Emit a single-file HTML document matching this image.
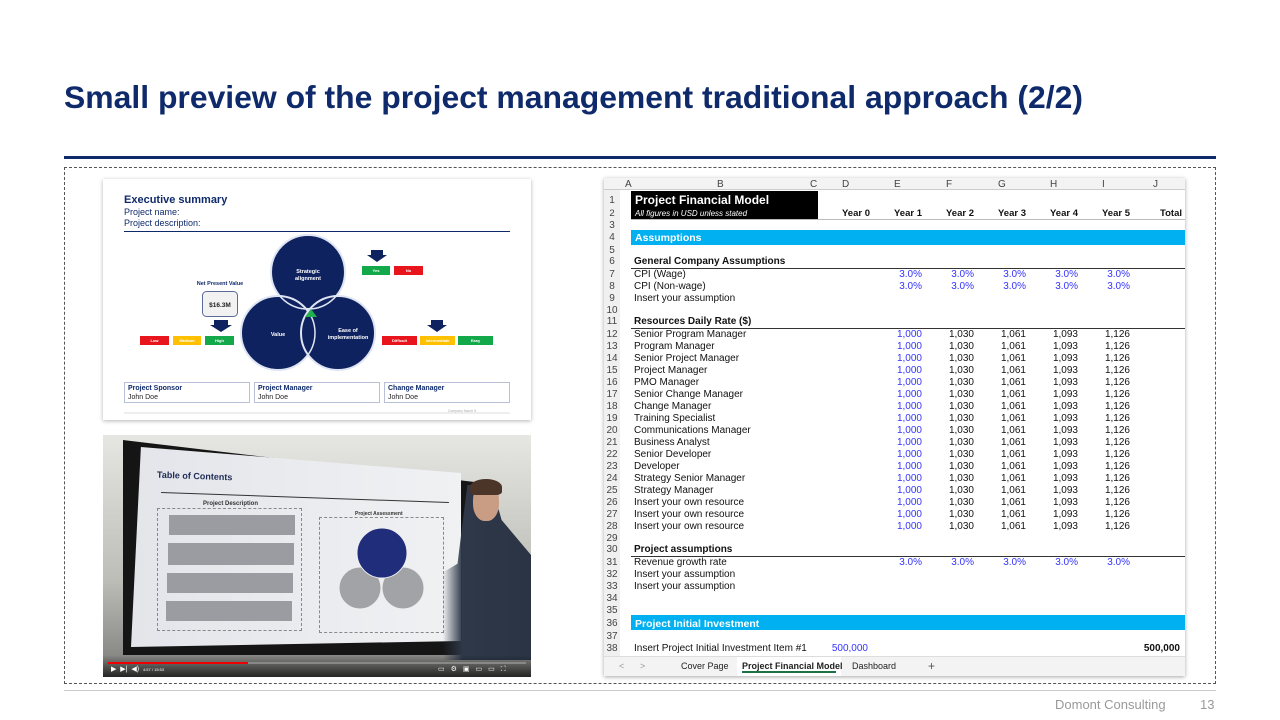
<!DOCTYPE html>
<html><head><meta charset="utf-8"><style>
*{margin:0;padding:0;box-sizing:border-box}
body{width:1280px;height:720px;background:#fff;position:relative;overflow:hidden;font-family:"Liberation Sans",Arial,sans-serif}
.a{position:absolute}
h1{position:absolute;left:64px;top:79px;font-size:31.9px;font-weight:bold;color:#0f2a6b;white-space:nowrap}
.sheet{position:absolute;left:604px;top:178px;width:581px;height:498px;background:#fff;box-shadow:0 1px 4px rgba(0,0,0,.35);overflow:hidden;font-size:10px;color:#111}
.r{position:absolute;left:0;width:581px;height:12px;line-height:12px}
.r i{position:absolute;left:0;width:16px;text-align:center;font-style:normal;color:#444;background:#f0f0f0;height:13px}
.r b{position:absolute;left:30px;font-weight:normal;white-space:nowrap}
.r s{position:absolute;text-decoration:none;text-align:right;width:50px}
.bl{color:#3333ff}
.e{left:268px}.f{left:320px}.g{left:372px}.h{left:424px}.k{left:476px}
.slide{position:absolute;left:103px;top:179px;width:428px;height:241px;background:#fff;box-shadow:0 1px 4px rgba(0,0,0,.3);font-family:"Liberation Sans",sans-serif}
.tag{position:absolute;height:9px;font-size:4px;color:#fff;font-weight:bold;text-align:center;line-height:9px}
.pb{position:absolute;top:203px;width:126px;height:21px;border:1px solid #b8c0d8;font-size:7px;padding:1px 3px;color:#222;line-height:9px}
.pb strong{color:#0f2a6b}
</style></head><body>
<h1>Small preview of the project management traditional approach (2/2)</h1>
<div class="a" style="left:64px;top:156px;width:1152px;height:3px;background:#0f2a6b"></div>
<div class="a" style="left:64px;top:167px;width:1152px;height:517px;border:1px dashed #555"></div>
<div class="a" style="left:64px;top:690px;width:1152px;height:1px;background:#ccc"></div>
<div class="a" style="left:1055px;top:697px;font-size:13px;color:#999">Domont Consulting</div>
<div class="a" style="left:1200px;top:697px;font-size:13px;color:#999">13</div>

<!-- Executive summary slide -->
<div class="slide">
<div class="a" style="left:21px;top:15px;font-size:11px;font-weight:bold;color:#0f2a6b">Executive summary</div>
<div class="a" style="left:21px;top:28px;font-size:9px;color:#0f2a6b;line-height:11px">Project name:<br>Project description:</div>
<div class="a" style="left:21px;top:52px;width:386px;height:1px;background:#0f2a6b"></div>
<svg class="a" style="left:0;top:0" width="428" height="241">
<g fill="#0f2260" stroke="#dfe5f3" stroke-width="2">
<circle cx="205" cy="93" r="37"/><circle cx="175" cy="154" r="37"/><circle cx="235" cy="154" r="37"/>
</g>
<g fill="none" stroke="#dfe5f3" stroke-width="1.5"><circle cx="205" cy="93" r="37"/><circle cx="175" cy="154" r="37"/></g>
<polygon points="202,138 214,138 208,130" fill="#22b14c"/>
<g fill="#0f2260"><polygon points="111,141 125,141 125,146 129,146 118,153 107,146 111,146"/>
<polygon points="268,71 280,71 280,76 284,76 274,83 264,76 268,76"/>
<polygon points="328,141 340,141 340,146 344,146 334,153 324,146 328,146"/></g>
<rect x="99.5" y="112.5" width="35" height="25" rx="4" fill="#f2f2f2" stroke="#5a6a9a"/>
<g font-family="Liberation Sans" font-weight="bold" fill="#fff" font-size="5.5" text-anchor="middle">
<text x="205" y="94">Strategic</text><text x="205" y="101">alignment</text>
<text x="175" y="157">Value</text>
<text x="245" y="153">Ease of</text><text x="245" y="160">implementation</text>
<text x="117" y="106" fill="#0f2a6b">Net Present Value</text>
<text x="117" y="128" fill="#222" font-size="6.5">$16.3M</text>
<text x="359" y="233" fill="#aaa" font-weight="normal" font-size="3.5">Company Name      5</text>
</g>
<line x1="21" y1="234" x2="407" y2="234" stroke="#ddd"/>
</svg>
<div class="tag" style="left:37px;top:157px;width:29px;background:#e8161c">Low</div>
<div class="tag" style="left:70px;top:157px;width:28px;background:#ffc000">Medium</div>
<div class="tag" style="left:102px;top:157px;width:29px;background:#13a84a">High</div>
<div class="tag" style="left:259px;top:87px;width:28px;background:#13a84a">Yes</div>
<div class="tag" style="left:291px;top:87px;width:29px;background:#e8161c">No</div>
<div class="tag" style="left:279px;top:157px;width:35px;background:#e8161c">Difficult</div>
<div class="tag" style="left:317px;top:157px;width:35px;background:#ffc000">Intermediate</div>
<div class="tag" style="left:355px;top:157px;width:35px;background:#13a84a">Easy</div>
<div class="pb" style="left:21px"><strong>Project Sponsor</strong><br>John Doe</div>
<div class="pb" style="left:151px"><strong>Project Manager</strong><br>John Doe</div>
<div class="pb" style="left:281px"><strong>Change Manager</strong><br>John Doe</div>
</div>

<!-- Video -->
<div class="a" style="left:103px;top:435px;width:428px;height:242px;overflow:hidden">
<div class="a" style="left:0;top:0;width:428px;height:242px;background:linear-gradient(180deg,#e6e6e2,#bdbdb8 60%,#7a7a78)"></div>
<div class="a" style="left:20px;top:5px;width:360px;height:215px;background:#151515;clip-path:polygon(0 0,100% 20%,100% 100%,0 100%)"></div>
<div class="a" style="left:28px;top:12px;width:330px;height:200px;background:linear-gradient(90deg,#e3e5ea,#f0f1f3);clip-path:polygon(3% 0,100% 13%,100% 97%,0 100%)"></div>
<div class="a" style="left:54px;top:36px;font-size:9px;font-weight:bold;color:#1d2a55;transform:rotate(2deg)">Table of Contents</div>
<div class="a" style="left:58px;top:62px;width:288px;height:1px;background:#333;transform:rotate(2deg)"></div>
<div class="a" style="left:100px;top:66px;font-size:6px;font-weight:bold;color:#333">Project Description</div>
<div class="a" style="left:252px;top:76px;font-size:5px;font-weight:bold;color:#333">Project Assessment</div>
<div class="a" style="left:54px;top:73px;width:145px;height:123px;border:1px dashed #888"></div>
<div class="a" style="left:216px;top:82px;width:125px;height:116px;border:1px dashed #888"></div>
<div class="a" style="left:66px;top:80px;width:126px;height:20px;background:#9a9ca2"></div>
<div class="a" style="left:65px;top:108px;width:126px;height:22px;background:#9a9ca2"></div>
<div class="a" style="left:64px;top:138px;width:126px;height:20px;background:#9a9ca2"></div>
<div class="a" style="left:63px;top:166px;width:126px;height:20px;background:#9a9ca2"></div>
<svg class="a" style="left:0;top:0" width="428" height="242">
<circle cx="257" cy="153" r="21" fill="#a2a3a6" stroke="#eee"/><circle cx="300" cy="153" r="21" fill="#a2a3a6" stroke="#eee"/>
<circle cx="279" cy="118" r="25" fill="#1f2d7a" stroke="#eee"/>
</svg>
<div class="a" style="left:330px;top:50px;width:98px;height:175px;background:linear-gradient(90deg,transparent 10%,#2e3848 30%,#2a3444 100%);clip-path:polygon(35% 0,60% 0,70% 20%,100% 40%,100% 100%,10% 100%,10% 50%,25% 45%)"></div>
<div class="a" style="left:370px;top:48px;width:26px;height:38px;border-radius:45%;background:#c99d83"></div>
<div class="a" style="left:367px;top:44px;width:32px;height:16px;border-radius:50% 50% 20% 20%;background:#4a3528"></div>
<div class="a" style="left:0;top:220px;width:428px;height:22px;background:linear-gradient(transparent,rgba(0,0,0,.7))"></div>
<div class="a" style="left:5px;top:227px;width:418px;height:2px;background:#888"></div>
<div class="a" style="left:5px;top:227px;width:140px;height:2px;background:#e00"></div>
<div class="a" style="left:8px;top:230px;font-size:7px;color:#fff;white-space:nowrap">▶ &nbsp;▶| &nbsp;◀) &nbsp;<span style="font-size:4px">4:57 / 15:53</span></div>
<div class="a" style="left:335px;top:230px;font-size:7px;color:#fff;letter-spacing:6px">▭⚙▣▭▭⛶</div>
</div>

<!-- Spreadsheet -->
<div class="sheet">
<div class="a" style="left:0;top:0;width:581px;height:12px;background:#f3f3f3;border-bottom:1px solid #ccc;font-size:10px;color:#444;line-height:13px">
<span class="a" style="left:21px">A</span><span class="a" style="left:113px">B</span><span class="a" style="left:206px">C</span><span class="a" style="left:238px">D</span><span class="a" style="left:290px">E</span><span class="a" style="left:342px">F</span><span class="a" style="left:394px">G</span><span class="a" style="left:446px">H</span><span class="a" style="left:498px">I</span><span class="a" style="left:549px">J</span></div>
<div class="a" style="left:0;top:12px;width:16px;height:486px;background:#f0f0f0"></div>
<div class="a" style="left:27px;top:13px;width:187px;height:28px;background:#000"></div>
<div class="a" style="left:31px;top:15px;font-size:12px;font-weight:bold;color:#fff">Project Financial Model</div>
<div class="a" style="left:31px;top:31px;font-size:8px;font-style:italic;color:#fff">All figures in USD unless stated</div>
<div class="r" style="top:17px"><i>1</i></div>
<div class="r" style="top:30px;font-weight:bold;font-size:9.5px"><i style="font-weight:normal">2</i><s style="left:216px">Year 0</s><s class="e">Year 1</s><s class="f">Year 2</s><s class="g">Year 3</s><s class="h">Year 4</s><s class="k">Year 5</s><s style="left:528px">Total</s></div>
<div class="a" style="left:27px;top:41px;width:554px;height:1px;background:#bbb"></div>
<div class="r" style="top:42px"><i>3</i></div>
<div class="a" style="left:27px;top:52px;width:554px;height:15px;background:#00b0f0"></div>
<div class="r" style="top:54px;color:#fff;font-weight:bold;font-size:10.5px"><i style="color:#444;font-weight:normal;font-size:10px">4</i><b style="left:31px;font-weight:bold">Assumptions</b></div>
<div class="r" style="top:67px"><i>5</i></div>
<div class="r" style="top:78px;font-weight:bold"><i style="font-weight:normal">6</i><b style="font-weight:bold">General Company Assumptions</b></div>
<div class="a" style="left:27px;top:90px;width:554px;height:1px;background:#333"></div>
<div class="r" style="top:91px"><i>7</i><b>CPI (Wage)</b><s class="e bl">3.0%</s><s class="f bl">3.0%</s><s class="g bl">3.0%</s><s class="h bl">3.0%</s><s class="k bl">3.0%</s></div>
<div class="r" style="top:103px"><i>8</i><b>CPI (Non-wage)</b><s class="e bl">3.0%</s><s class="f bl">3.0%</s><s class="g bl">3.0%</s><s class="h bl">3.0%</s><s class="k bl">3.0%</s></div>
<div class="r" style="top:115px"><i>9</i><b>Insert your assumption</b></div>
<div class="r" style="top:127px"><i>10</i></div>
<div class="r" style="top:138px"><i>11</i><b style="font-weight:bold">Resources Daily Rate ($)</b></div>
<div class="a" style="left:27px;top:150px;width:554px;height:1px;background:#333"></div>
<div class="r" style="top:151px"><i>12</i><b>Senior Program Manager</b><s class="e bl">1,000</s><s class="f">1,030</s><s class="g">1,061</s><s class="h">1,093</s><s class="k">1,126</s></div>
<div class="r" style="top:163px"><i>13</i><b>Program Manager</b><s class="e bl">1,000</s><s class="f">1,030</s><s class="g">1,061</s><s class="h">1,093</s><s class="k">1,126</s></div>
<div class="r" style="top:175px"><i>14</i><b>Senior Project Manager</b><s class="e bl">1,000</s><s class="f">1,030</s><s class="g">1,061</s><s class="h">1,093</s><s class="k">1,126</s></div>
<div class="r" style="top:187px"><i>15</i><b>Project Manager</b><s class="e bl">1,000</s><s class="f">1,030</s><s class="g">1,061</s><s class="h">1,093</s><s class="k">1,126</s></div>
<div class="r" style="top:199px"><i>16</i><b>PMO Manager</b><s class="e bl">1,000</s><s class="f">1,030</s><s class="g">1,061</s><s class="h">1,093</s><s class="k">1,126</s></div>
<div class="r" style="top:211px"><i>17</i><b>Senior Change Manager</b><s class="e bl">1,000</s><s class="f">1,030</s><s class="g">1,061</s><s class="h">1,093</s><s class="k">1,126</s></div>
<div class="r" style="top:223px"><i>18</i><b>Change Manager</b><s class="e bl">1,000</s><s class="f">1,030</s><s class="g">1,061</s><s class="h">1,093</s><s class="k">1,126</s></div>
<div class="r" style="top:235px"><i>19</i><b>Training Specialist</b><s class="e bl">1,000</s><s class="f">1,030</s><s class="g">1,061</s><s class="h">1,093</s><s class="k">1,126</s></div>
<div class="r" style="top:247px"><i>20</i><b>Communications Manager</b><s class="e bl">1,000</s><s class="f">1,030</s><s class="g">1,061</s><s class="h">1,093</s><s class="k">1,126</s></div>
<div class="r" style="top:259px"><i>21</i><b>Business Analyst</b><s class="e bl">1,000</s><s class="f">1,030</s><s class="g">1,061</s><s class="h">1,093</s><s class="k">1,126</s></div>
<div class="r" style="top:271px"><i>22</i><b>Senior Developer</b><s class="e bl">1,000</s><s class="f">1,030</s><s class="g">1,061</s><s class="h">1,093</s><s class="k">1,126</s></div>
<div class="r" style="top:283px"><i>23</i><b>Developer</b><s class="e bl">1,000</s><s class="f">1,030</s><s class="g">1,061</s><s class="h">1,093</s><s class="k">1,126</s></div>
<div class="r" style="top:295px"><i>24</i><b>Strategy Senior Manager</b><s class="e bl">1,000</s><s class="f">1,030</s><s class="g">1,061</s><s class="h">1,093</s><s class="k">1,126</s></div>
<div class="r" style="top:307px"><i>25</i><b>Strategy Manager</b><s class="e bl">1,000</s><s class="f">1,030</s><s class="g">1,061</s><s class="h">1,093</s><s class="k">1,126</s></div>
<div class="r" style="top:319px"><i>26</i><b>Insert your own resource</b><s class="e bl">1,000</s><s class="f">1,030</s><s class="g">1,061</s><s class="h">1,093</s><s class="k">1,126</s></div>
<div class="r" style="top:331px"><i>27</i><b>Insert your own resource</b><s class="e bl">1,000</s><s class="f">1,030</s><s class="g">1,061</s><s class="h">1,093</s><s class="k">1,126</s></div>
<div class="r" style="top:343px"><i>28</i><b>Insert your own resource</b><s class="e bl">1,000</s><s class="f">1,030</s><s class="g">1,061</s><s class="h">1,093</s><s class="k">1,126</s></div>
<div class="r" style="top:355px"><i>29</i></div>
<div class="r" style="top:366px"><i>30</i><b style="font-weight:bold">Project assumptions</b></div>
<div class="a" style="left:27px;top:378px;width:554px;height:1px;background:#333"></div>
<div class="r" style="top:379px"><i>31</i><b>Revenue growth rate</b><s class="e bl">3.0%</s><s class="f bl">3.0%</s><s class="g bl">3.0%</s><s class="h bl">3.0%</s><s class="k bl">3.0%</s></div>
<div class="r" style="top:391px"><i>32</i><b>Insert your assumption</b></div>
<div class="r" style="top:403px"><i>33</i><b>Insert your assumption</b></div>
<div class="r" style="top:415px"><i>34</i></div>
<div class="r" style="top:427px"><i>35</i></div>
<div class="a" style="left:27px;top:437px;width:554px;height:15px;background:#00b0f0"></div>
<div class="r" style="top:440px;color:#fff;font-size:10.5px"><i style="color:#444;font-size:10px">36</i><b style="left:31px;font-weight:bold">Project Initial Investment</b></div>
<div class="r" style="top:453px"><i>37</i></div>
<div class="r" style="top:465px"><i>38</i><b>Insert Project Initial Investment Item #1</b><s class="bl" style="left:214px">500,000</s><s style="left:526px;font-weight:bold">500,000</s></div>
<div class="a" style="left:0;top:478px;width:581px;height:20px;background:#f3f3f3;border-top:1px solid #ddd;font-size:9px;color:#222;line-height:18px">
<span class="a" style="left:15px;color:#999">&lt;</span><span class="a" style="left:36px;color:#999">&gt;</span>
<span class="a" style="left:77px">Cover Page</span>
<span class="a" style="left:133px;top:0;width:104px;height:19px;background:#fff"></span>
<span class="a" style="left:138px;font-weight:bold">Project Financial Model</span>
<span class="a" style="left:138px;top:14px;width:94px;height:2px;background:#1e7145"></span>
<span class="a" style="left:248px">Dashboard</span>
<span class="a" style="left:324px;font-size:12px;color:#555">+</span></div>
</div>
</body></html>
